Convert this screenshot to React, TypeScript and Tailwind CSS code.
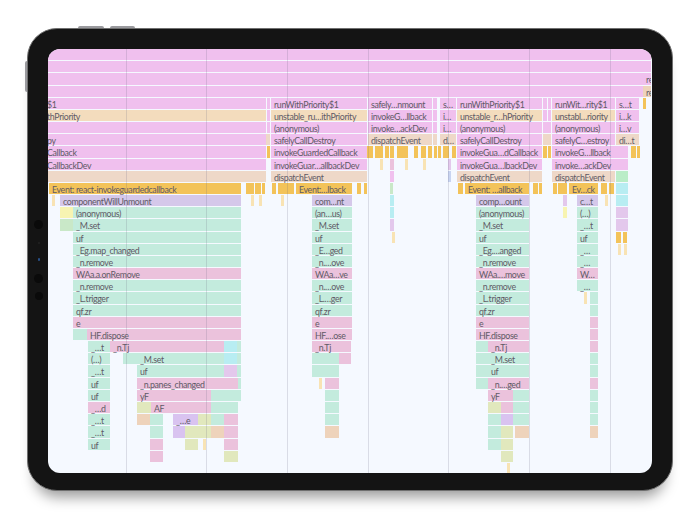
import React from 'react';

const pink = 'bg-[#f0c0ee]';
const tan = 'bg-[#f3dcbd]';
const disp = 'bg-[#eed8c8]';
const ora = 'bg-[#f3c359]';
const pale = 'bg-[#f8e3b4]';
const pur = 'bg-[#d5c8ea]';
const teal = 'bg-[#c3ebdd]';
const rose = 'bg-[#ebc2dc]';
const yel = 'bg-[#f7f4b2]';
const grn = 'bg-[#c9e8c8]';
const mint = 'bg-[#baedc8]';
const sky = 'bg-[#b8edf2]';
const lil = 'bg-[#e3c8ec]';
const vio = 'bg-[#d9c3f0]';
const oli = 'bg-[#e1e8bd]';
const pch = 'bg-[#eed3bb]';
const blu = 'bg-[#c8d4f0]';

// x from, x to (page pixels), colour, label, label cut off by the left edge
type Bar = [number, number, string, string?, boolean?];

const rows: Bar[][] = [
  [[48, 651, pink]],
  [[48, 651, pink]],
  [[48, 643, pink], [643, 651, pink, 're']],
  [[48, 640, pink], [640, 643, pink], [643, 651, pch, 're']],
  [[48, 266, pink, '$1', true], [267, 270, pink], [271, 367, pink, 'runWithPriority$1'], [368, 432, pink, 'safely…nmount'], [433, 437, pink], [440, 456, pink, 's…'], [457, 542, pink, 'runWithPriority$1'], [543, 547, pink], [548, 551, pink], [552, 615, pink, 'runWit…rity$1'], [616, 639, pink, 's…t'], [643, 644, ora]],
  [[48, 266, tan, 'thPriority', true], [267, 270, pink], [271, 367, tan, 'unstable_ru…ithPriority'], [368, 432, pink, 'invokeG…llback'], [433, 437, pink], [440, 456, pink, 'i…'], [457, 542, tan, 'unstable_r…hPriority'], [543, 547, pink], [548, 551, pink], [552, 615, tan, 'unstabl…riority'], [616, 639, pink, 'i…k']],
  [[48, 266, pink], [267, 270, pink], [271, 367, pink, '(anonymous)'], [368, 432, pink, 'invoke…ackDev'], [433, 437, pink], [440, 456, pink, 'i…'], [457, 542, pink, '(anonymous)'], [543, 551, pink], [552, 615, pink, '(anonymous)'], [616, 639, pink, 'i…v']],
  [[48, 266, pink, 'py', true], [266, 270, disp], [271, 367, pink, 'safelyCallDestroy'], [368, 432, disp, 'dispatchEvent'], [433, 437, disp], [440, 456, disp, 'd…'], [457, 542, pink, 'safelyCallDestroy'], [543, 551, disp], [552, 615, pink, 'safelyC…estroy'], [616, 639, disp, 'di…t']],
  [[48, 266, pink, 'Callback', true], [267, 269, ora], [271, 367, pink, 'invokeGuardedCallback'], [367, 373, ora], [375, 383, ora], [385, 389, ora], [390, 394, ora], [397, 408, ora], [414, 418, ora], [421, 426, ora], [428, 432, ora], [434, 437, ora], [438, 441, ora], [443, 449, ora], [452, 456, ora], [457, 542, pink, 'invokeGua…dCallback'], [543, 547, ora], [548, 551, ora], [552, 628, pink, 'invokeG…llback'], [631, 636, ora], [637, 638, ora]],
  [[48, 266, pink, 'CallbackDev', true], [271, 367, pink, 'invokeGuar…allbackDev'], [380, 381, pale], [390, 394, rose], [405, 406, pale], [423, 425, pale], [448, 450, lil], [457, 542, pink, 'invokeGua…lbackDev'], [552, 628, pink, 'invoke…ackDev']],
  [[48, 266, disp], [271, 367, disp, 'dispatchEvent'], [390, 394, pink], [448, 450, blu], [457, 542, disp, 'dispatchEvent'], [552, 615, disp, 'dispatchEvent'], [616, 628, mint]],
  [[49, 241, ora, 'Event: react-invokeguardedcallback'], [246, 254, ora], [255, 261, ora], [262, 265, ora], [272, 276, ora], [278, 294, ora], [296, 352, ora, 'Event:…lback'], [357, 361, ora], [364, 367, ora], [390, 393, grn], [458, 463, ora], [465, 529, ora, 'Event: …allback'], [533, 538, ora], [539, 542, ora], [553, 557, ora], [558, 567, ora], [569, 598, ora, 'Ev…ck'], [601, 607, ora], [609, 614, ora], [616, 628, sky]],
  [[52, 53, pale], [60, 241, pur, 'componentWillUnmount'], [251, 252, pale], [259, 260, pale], [281, 282, pale], [312, 352, pur, 'com…nt'], [390, 394, sky], [476, 529, pur, 'comp…ount'], [563, 567, lil], [577, 598, pur, 'c…t'], [605, 606, pale], [616, 628, sky]],
  [[60, 73, yel], [73, 241, teal, '(anonymous)'], [312, 352, teal, '(an…us)'], [390, 394, sky], [476, 529, teal, '(anonymous)'], [563, 567, yel], [577, 598, teal, '(…)'], [616, 628, lil]],
  [[60, 73, grn], [73, 241, teal, '_M.set'], [312, 352, teal, '_M.set'], [390, 394, lil], [476, 529, teal, '_M.set'], [577, 598, teal, '_…t'], [616, 628, lil]],
  [[73, 241, teal, 'uf'], [312, 352, teal, 'uf'], [392, 393, pale], [476, 529, teal, 'uf'], [577, 598, teal, 'uf'], [616, 621, ora], [623, 627, ora]],
  [[73, 241, teal, '_Eg.map_changed'], [312, 352, teal, '_E…ged'], [476, 529, teal, '_Eg.…anged'], [577, 598, teal, '_…'], [618, 619, pale], [624, 625, pale]],
  [[73, 241, teal, '_n.remove'], [312, 352, teal, '_n.…ove'], [476, 529, teal, '_n.remove'], [577, 598, teal, '_…']],
  [[73, 241, rose, 'WAa.a.onRemove'], [312, 352, rose, 'WAa…ve'], [476, 529, rose, 'WAa.…move'], [577, 598, rose, 'W…']],
  [[73, 241, teal, '_n.remove'], [312, 352, teal, '_n.…ove'], [476, 529, teal, '_n.remove'], [577, 598, teal, '_…']],
  [[73, 241, teal, '_L.trigger'], [312, 352, teal, '_L.…ger'], [476, 529, teal, '_L.trigger'], [584, 585, pale], [590, 598, teal]],
  [[73, 241, teal, 'qf.zr'], [312, 352, teal, 'qf.zr'], [476, 529, teal, 'qf.zr'], [590, 598, teal]],
  [[73, 241, rose, 'e'], [312, 352, rose, 'e'], [476, 529, rose, 'e'], [590, 598, rose]],
  [[73, 87, teal], [87, 241, rose, 'HF.dispose'], [312, 352, rose, 'HF.…ose'], [476, 529, rose, 'HF.dispose'], [590, 598, rose]],
  [[88, 110, teal, '_…t'], [110, 224, rose, '_n.Tj'], [224, 237, sky], [237, 241, teal], [312, 351, rose, '_n.Tj'], [476, 488, teal], [488, 529, rose, '_n.Tj'], [590, 598, rose]],
  [[88, 110, teal, '(…)'], [123, 137, teal], [137, 224, teal, '_M.set'], [224, 237, sky], [237, 241, teal], [312, 325, teal], [325, 339, teal], [339, 351, rose], [476, 488, teal], [488, 529, teal, '_M.set'], [590, 598, teal]],
  [[88, 110, teal, '_…t'], [137, 224, teal, 'uf'], [224, 237, lil], [237, 241, teal], [312, 325, teal], [325, 339, teal], [476, 488, teal], [488, 529, teal, 'uf'], [590, 598, teal]],
  [[88, 110, teal, 'uf'], [137, 238, rose, '_n.panes_changed'], [238, 241, teal], [319, 320, pale], [325, 339, rose], [476, 488, teal], [488, 529, rose, '_n.…ged'], [590, 598, rose]],
  [[88, 110, teal, 'uf'], [137, 211, rose, 'yF'], [211, 241, teal], [325, 339, teal], [488, 513, rose, 'yF'], [513, 529, teal], [590, 598, teal]],
  [[88, 110, rose, '_…d'], [137, 151, oli], [151, 211, rose, 'AF'], [211, 238, teal], [325, 339, teal], [488, 501, oli], [501, 513, rose], [513, 529, teal], [590, 598, teal]],
  [[88, 110, teal, '_…t'], [137, 150, pch], [150, 163, teal], [173, 198, vio, '_…e'], [198, 211, oli], [211, 224, teal], [224, 238, rose], [325, 339, teal], [488, 501, teal], [501, 513, vio], [513, 529, teal], [590, 598, teal]],
  [[88, 110, teal, '_…t'], [150, 163, teal], [173, 185, vio], [185, 198, oli], [198, 211, oli], [211, 224, pch], [224, 238, rose], [325, 339, pch], [488, 501, teal], [501, 513, oli], [515, 529, pch], [590, 598, pch]],
  [[88, 110, teal, 'uf'], [150, 163, rose], [185, 198, oli], [203, 204, pale], [224, 238, rose], [488, 501, teal], [501, 513, oli]],
  [[150, 163, rose], [224, 238, oli], [501, 513, oli]],
  [[507, 508, pale]],
];

const gridLines = [126, 206, 287, 368, 448, 529, 610];

export default function App() {
  return (
    <div className="flex justify-center w-[700px] h-[519px] bg-white pt-[28px] overflow-hidden font-['Lato',sans-serif]">
      <div className="relative w-[646px] h-[463px] rounded-[30px] bg-[#141414] border border-[#6f6f6f] p-[20px] shadow-[0_14px_14px_-8px_rgba(0,0,0,0.4)]">
        {/* hardware buttons */}
        <div className="absolute left-[50px] top-[-3px] w-[26px] h-[2px] rounded-t-sm bg-[#9a9a9e]" />
        <div className="absolute left-[82px] top-[-3px] w-[25px] h-[2px] rounded-t-sm bg-[#9a9a9e]" />
        <div className="absolute left-[-3px] top-[32px] w-[2px] h-[31px] rounded-l-sm bg-[#9a9a9e]" />

        {/* cameras on the bezel */}
        <div className="absolute left-[6px] top-[191px] flex flex-col items-center w-[9px]">
          <div className="w-[9px] h-[9px] rounded-full bg-[#0a0a0a]" />
          <div className="w-[2px] h-[2px] mt-[13px] rounded-full bg-[#222222]" />
          <div className="w-[2px] h-[3px] mt-[14px] rounded-full bg-[#27508a]" />
          <div className="w-[9px] h-[9px] mt-[13px] rounded-full bg-[#0a0a0a]" />
          <div className="w-[8px] h-[8px] mt-[9px] rounded-full bg-[#0a0a0a]" />
        </div>

        <div className="relative flex flex-col w-[604px] h-[424px] rounded-[12px] overflow-hidden bg-[#f5f9ff] text-[8.8px] tracking-[-0.35px] leading-[11px] text-[#5f5a66]">
          {rows.map((row, r) => (
            <div key={r} className="relative shrink-0 h-[12.18px]">
              {row.map(([from, to, color, label, cut], i) => (
                <div
                  key={i}
                  className={`absolute top-0 h-[11.2px] pt-[1px] overflow-x-clip whitespace-nowrap ${color} ${cut ? 'indent-[-1px]' : 'pl-[3px]'}`}
                  style={{ left: from - 48, width: to - from - 0.4 }}
                >
                  {label}
                </div>
              ))}
            </div>
          ))}
          {gridLines.map((x) => (
            <div
              key={x}
              className="absolute top-0 bottom-0 w-px bg-[#6b6b80]/20"
              style={{ left: x - 48 }}
            />
          ))}
        </div>
      </div>
    </div>
  );
}
